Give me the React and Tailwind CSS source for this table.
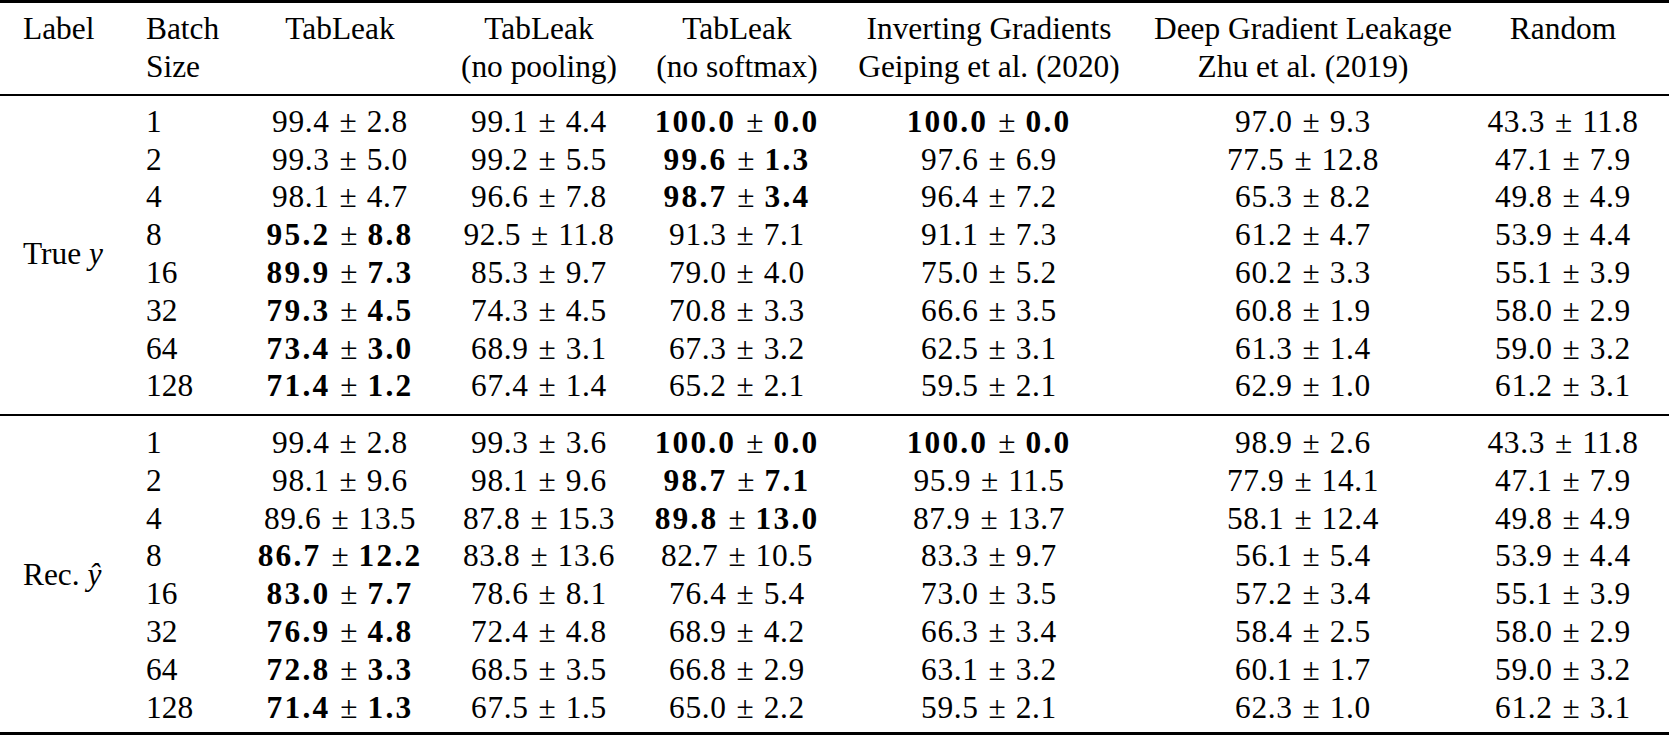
const cols = 'grid grid-cols-[127px_113px_200px_198px_198px_306px_322px_198px]';

const trueY = [
  ['1', '99.4 2.8', '99.1 4.4', '*100.0 0.0', '*100.0 0.0', '97.0 9.3', '43.3 11.8'],
  ['2', '99.3 5.0', '99.2 5.5', '*99.6 1.3', '97.6 6.9', '77.5 12.8', '47.1 7.9'],
  ['4', '98.1 4.7', '96.6 7.8', '*98.7 3.4', '96.4 7.2', '65.3 8.2', '49.8 4.9'],
  ['8', '*95.2 8.8', '92.5 11.8', '91.3 7.1', '91.1 7.3', '61.2 4.7', '53.9 4.4'],
  ['16', '*89.9 7.3', '85.3 9.7', '79.0 4.0', '75.0 5.2', '60.2 3.3', '55.1 3.9'],
  ['32', '*79.3 4.5', '74.3 4.5', '70.8 3.3', '66.6 3.5', '60.8 1.9', '58.0 2.9'],
  ['64', '*73.4 3.0', '68.9 3.1', '67.3 3.2', '62.5 3.1', '61.3 1.4', '59.0 3.2'],
  ['128', '*71.4 1.2', '67.4 1.4', '65.2 2.1', '59.5 2.1', '62.9 1.0', '61.2 3.1'],
];

const recY = [
  ['1', '99.4 2.8', '99.3 3.6', '*100.0 0.0', '*100.0 0.0', '98.9 2.6', '43.3 11.8'],
  ['2', '98.1 9.6', '98.1 9.6', '*98.7 7.1', '95.9 11.5', '77.9 14.1', '47.1 7.9'],
  ['4', '89.6 13.5', '87.8 15.3', '*89.8 13.0', '87.9 13.7', '58.1 12.4', '49.8 4.9'],
  ['8', '*86.7 12.2', '83.8 13.6', '82.7 10.5', '83.3 9.7', '56.1 5.4', '53.9 4.4'],
  ['16', '*83.0 7.7', '78.6 8.1', '76.4 5.4', '73.0 3.5', '57.2 3.4', '55.1 3.9'],
  ['32', '*76.9 4.8', '72.4 4.8', '68.9 4.2', '66.3 3.4', '58.4 2.5', '58.0 2.9'],
  ['64', '*72.8 3.3', '68.5 3.5', '66.8 2.9', '63.1 3.2', '60.1 1.7', '59.0 3.2'],
  ['128', '*71.4 1.3', '67.5 1.5', '65.0 2.2', '59.5 2.1', '62.3 1.0', '61.2 3.1'],
];

function Value({ v }) {
  const bold = v.startsWith('*');
  const [mean, std] = v.replace('*', '').split(' ');
  const num = bold ? 'font-bold tracking-[0.07em]' : 'tracking-[0.02em]';
  return (
    <div className="text-center whitespace-nowrap">
      <span className={num}>{mean}</span>
      <span className="mx-[10px]">±</span>
      <span className={num}>{std}</span>
    </div>
  );
}

function Block({ label, rows }) {
  return (
    <div className={`${cols} grid-rows-[repeat(8,37.8px)]`}>
      <div className="row-span-8 col-start-1 row-start-1 flex items-center pl-[23px]">{label}</div>
      {rows.map((r, i) => (
        <div key={i} className="contents">
          <div className="col-start-2 pl-[19px]" style={{ gridRowStart: i + 1 }}>{r[0]}</div>
          {r.slice(1).map((v, j) => (
            <div key={j} style={{ gridRowStart: i + 1, gridColumnStart: j + 3 }}>
              <Value v={v} />
            </div>
          ))}
        </div>
      ))}
    </div>
  );
}

export default function App() {
  return (
    <div className="w-[1669px] h-[738px] overflow-hidden bg-white text-black font-[family-name:Liberation_Serif] text-[31.4px] leading-[37.8px]">
      <div className="h-[2.5px] bg-black" />
      <div className={`${cols} mt-[7.5px]`}>
        <div className="pl-[23px]">Label</div>
        <div className="pl-[19px]">Batch<br />Size</div>
        <div className="text-center">TabLeak</div>
        <div className="text-center">TabLeak<br />(no pooling)</div>
        <div className="text-center">TabLeak<br />(no softmax)</div>
        <div className="text-center whitespace-nowrap">Inverting Gradients<br />Geiping et al. (2020)</div>
        <div className="text-center whitespace-nowrap">Deep Gradient Leakage<br />Zhu et al. (2019)</div>
        <div className="text-center">Random</div>
      </div>
      <div className="h-[1.6px] bg-black mt-[8.6px]" />
      <div className="mt-[7px]">
        <Block label={<span>True <i>y</i></span>} rows={trueY} />
      </div>
      <div className="h-[1.6px] bg-black mt-[8.8px]" />
      <div className="mt-[8.5px]">
        <Block label={<span>Rec. <i>ŷ</i></span>} rows={recY} />
      </div>
      <div className="h-[2.5px] bg-black mt-[5.8px]" />
    </div>
  );
}
